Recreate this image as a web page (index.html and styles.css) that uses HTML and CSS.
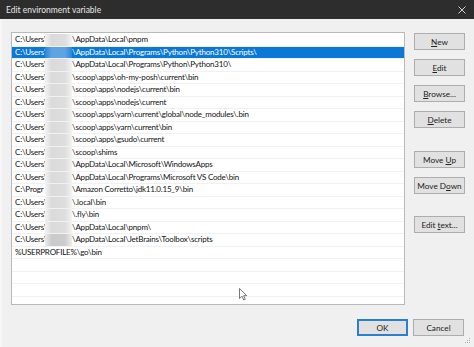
FILE: index.html
```html
<!DOCTYPE html>
<html>
<head>
    <title>Edit environment variable</title>
    <link rel="stylesheet" href="styles.css">
</head>
<body>
    <div class="window">
        <!-- Title bar -->
        <div class="titlebar">
            <span class="title">Edit environment variable</span>
            <svg class="close" width="8" height="8" viewBox="0 0 8 8">
                <path d="M0.5 0.5 L7.5 7.5 M7.5 0.5 L0.5 7.5" stroke="#d0d0d0" stroke-width="1"/>
            </svg>
        </div>

        <div class="main">
            <!-- Path list -->
            <div class="list">
                <div class="row"><span class="pre">C:\Users\</span><span class="blur"></span><span>\AppData\Local\pnpm</span></div>
                <div class="row selected"><span class="pre">C:\Users\</span><span class="blur"></span><span>\AppData\Local\Programs\Python\Python310\Scripts\</span></div>
                <div class="row"><span class="pre">C:\Users\</span><span class="blur"></span><span>\AppData\Local\Programs\Python\Python310\</span></div>
                <div class="row"><span class="pre">C:\Users\</span><span class="blur"></span><span>\scoop\apps\oh-my-posh\current\bin</span></div>
                <div class="row"><span class="pre">C:\Users\</span><span class="blur"></span><span>\scoop\apps\nodejs\current\bin</span></div>
                <div class="row"><span class="pre">C:\Users\</span><span class="blur"></span><span>\scoop\apps\nodejs\current</span></div>
                <div class="row"><span class="pre">C:\Users\</span><span class="blur"></span><span>\scoop\apps\yarn\current\global\node_modules\.bin</span></div>
                <div class="row"><span class="pre">C:\Users\</span><span class="blur"></span><span>\scoop\apps\yarn\current\bin</span></div>
                <div class="row"><span class="pre">C:\Users\</span><span class="blur"></span><span>\scoop\apps\gsudo\current</span></div>
                <div class="row"><span class="pre">C:\Users\</span><span class="blur"></span><span>\scoop\shims</span></div>
                <div class="row"><span class="pre">C:\Users\</span><span class="blur"></span><span>\AppData\Local\Microsoft\WindowsApps</span></div>
                <div class="row"><span class="pre">C:\Users\</span><span class="blur"></span><span>\AppData\Local\Programs\Microsoft VS Code\bin</span></div>
                <div class="row"><span class="pre">C:\Progr</span><span class="blur"></span><span>\Amazon Corretto\jdk11.0.15_9\bin</span></div>
                <div class="row"><span class="pre">C:\Users\</span><span class="blur"></span><span>\.local\bin</span></div>
                <div class="row"><span class="pre">C:\Users\</span><span class="blur"></span><span>\.fly\bin</span></div>
                <div class="row"><span class="pre">C:\Users\</span><span class="blur"></span><span>\AppData\Local\pnpm\</span></div>
                <div class="row"><span class="pre">C:\Users\</span><span class="blur dark"></span><span>\AppData\Local\JetBrains\Toolbox\scripts</span></div>
                <div class="row"><span>%USERPROFILE%\go\bin</span></div>
                <div class="row"></div>
                <div class="row"></div>
                <div class="row"></div>
                <div class="row"></div>
            </div>

            <!-- Side buttons -->
            <div class="side">
                <button class="btn"><u>N</u>ew</button>
                <button class="btn"><u>E</u>dit</button>
                <button class="btn"><u>B</u>rowse...</button>
                <button class="btn"><u>D</u>elete</button>
                <button class="btn gap-top">Move <u>U</u>p</button>
                <button class="btn">Move D<u>o</u>wn</button>
                <button class="btn gap-text">Edit <u>t</u>ext...</button>
            </div>
        </div>

        <div class="footer">
            <button class="btn default">OK</button>
            <button class="btn">Cancel</button>
        </div>

        <!-- mouse pointer over the list -->
        <svg class="cursor" width="9" height="13" viewBox="0 0 9 13">
            <path d="M0.5 0.5 L0.5 10.5 L3 8.2 L4.8 12 L6.3 11.3 L4.6 7.7 L7.8 7.7 Z" fill="#fff" stroke="#555" stroke-width="0.8"/>
        </svg>

        <!-- resize grip -->
        <svg class="grip" width="6" height="6" viewBox="0 0 6 6">
            <rect x="4" y="0" width="1" height="1" fill="#b0b0b0"/>
            <rect x="2" y="2" width="1" height="1" fill="#b0b0b0"/>
            <rect x="4" y="2" width="1" height="1" fill="#b0b0b0"/>
            <rect x="0" y="4" width="1" height="1" fill="#b0b0b0"/>
            <rect x="2" y="4" width="1" height="1" fill="#b0b0b0"/>
            <rect x="4" y="4" width="1" height="1" fill="#b0b0b0"/>
        </svg>
    </div>
</body>
</html>
```

FILE: styles.css
```css
* {
    margin: 0;
    padding: 0;
    box-sizing: border-box;
}
body {
    font-family: 'Lato', 'Noto Sans', sans-serif;
    background-color: #f0f0f0;
    color: #111;
}
.window {
    position: relative;
    width: 474px;
    height: 347px;
    background-color: #f0f0f0;
    border-left: 2px solid #f6f6f6;
    display: flex;
    flex-direction: column;
}
/* Title bar */
.titlebar {
    height: 19px;
    margin-left: -2px;
    background-color: #2d2d2d;
    color: #e6e6e6;
    display: flex;
    align-items: center;
    justify-content: space-between;
    padding: 0 8px 0 6px;
    font-size: 8.5px;
}
.main {
    display: flex;
    gap: 9px;
    padding: 13px 0 0 9px;
}
/* List of paths */
.list {
    width: 394px;
    height: 273px;
    background-color: #fff;
    border: 1px solid #b9b9b9;
    overflow: hidden;
    padding-top: 1px;
    font-size: 8px;
    letter-spacing: -0.2px;
}
.row {
    height: 12.5px;
    line-height: 11.5px;
    border-bottom: 1px solid #f1f1f1;
    padding-left: 3px;
    display: flex;
    white-space: nowrap;
}
.row.selected {
    background-color: #0a78d7;
    color: #fff;
}
.pre {
    width: 30px;
}
.blur {
    width: 27px;
    background: linear-gradient(90deg, #f3f3f3, #dadada 25%, #dedede 75%, #f4f4f4);
}
.blur.dark {
    background: linear-gradient(90deg, #ececec, #c9c9c9 25%, #cdcdcd 75%, #ededed);
}
.selected .blur {
    background: linear-gradient(90deg, #2a86d8, #5ea3e2 25%, #5ea3e2 75%, #2a86d8);
}
/* Buttons */
.side {
    display: flex;
    flex-direction: column;
    gap: 9px;
    padding-top: 1px;
}
.btn {
    width: 51px;
    height: 17px;
    background-color: #e1e1e1;
    border: 1px solid #adadad;
    font-family: 'Lato', 'Noto Sans', sans-serif;
    font-size: 8.2px;
    color: #222;
}
.btn.gap-top {
    margin-top: 14px;
}
.btn.gap-text {
    margin-top: 13px;
}
.btn.default {
    border: 2px solid #2b7fd0;
}
.footer {
    display: flex;
    justify-content: flex-end;
    gap: 5px;
    padding: 14px 10px 0 0;
}
.cursor {
    position: absolute;
    left: 237px;
    top: 288px;
}
.grip {
    position: absolute;
    right: 3px;
    bottom: 3px;
}
```
